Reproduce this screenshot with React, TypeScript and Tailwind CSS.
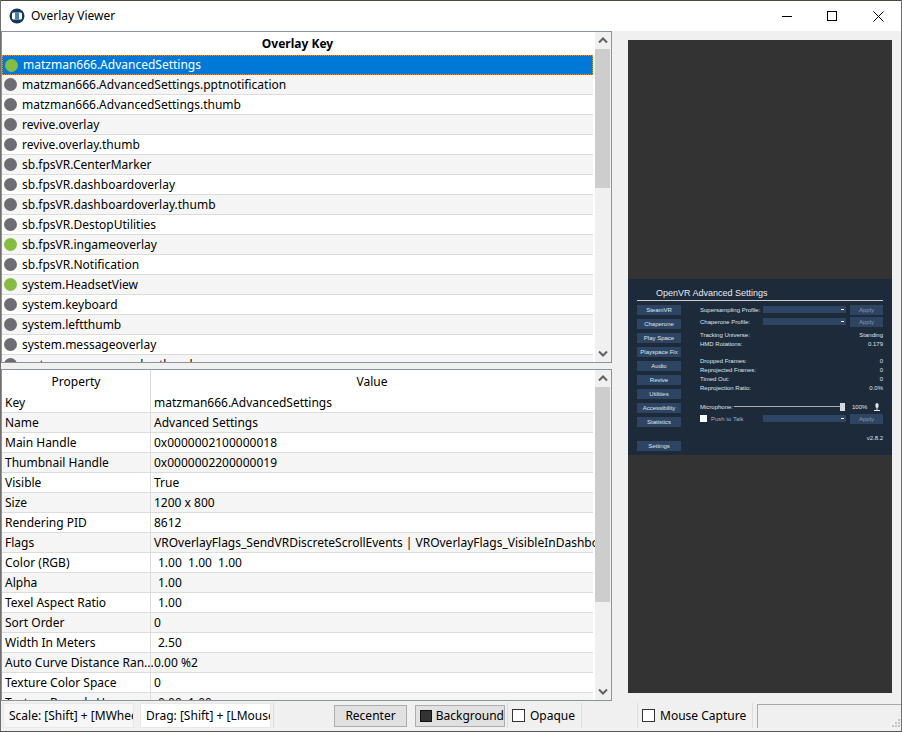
import React from 'react';

const overlays = [
  ['matzman666.AdvancedSettings', true],
  ['matzman666.AdvancedSettings.pptnotification', false],
  ['matzman666.AdvancedSettings.thumb', false],
  ['revive.overlay', false],
  ['revive.overlay.thumb', false],
  ['sb.fpsVR.CenterMarker', false],
  ['sb.fpsVR.dashboardoverlay', false],
  ['sb.fpsVR.dashboardoverlay.thumb', false],
  ['sb.fpsVR.DestopUtilities', false],
  ['sb.fpsVR.ingameoverlay', true],
  ['sb.fpsVR.Notification', false],
  ['system.HeadsetView', true],
  ['system.keyboard', false],
  ['system.leftthumb', false],
  ['system.messageoverlay', false],
  ['system.messageoverlay.thumb', false],
] as const;

const properties: [string, string, boolean?][] = [
  ['Key', 'matzman666.AdvancedSettings'],
  ['Name', 'Advanced Settings'],
  ['Main Handle', '0x0000002100000018'],
  ['Thumbnail Handle', '0x0000002200000019'],
  ['Visible', 'True'],
  ['Size', '1200 x 800'],
  ['Rendering PID', '8612'],
  ['Flags', 'VROverlayFlags_SendVRDiscreteScrollEvents | VROverlayFlags_VisibleInDashboard'],
  ['Color (RGB)', '1.00  1.00  1.00', true],
  ['Alpha', '1.00', true],
  ['Texel Aspect Ratio', '1.00', true],
  ['Sort Order', '0'],
  ['Width In Meters', '2.50', true],
  ['Auto Curve Distance Ran...', '0.00 %2'],
  ['Texture Color Space', '0'],
  ['Texture Bounds U', '0.00  1.00', true],
];

function Chevron({ down }: { down?: boolean }) {
  return (
    <svg width="10" height="7" viewBox="0 0 10 7" className="shrink-0">
      <path d={down ? 'M1 1.5 L5 5.5 L9 1.5' : 'M1 5.5 L5 1.5 L9 5.5'} fill="none" stroke="#606060" strokeWidth="2" />
    </svg>
  );
}

function Scrollbar({ offset, thumb }: { offset: string; thumb: string }) {
  return (
    <div className="flex h-full w-[16px] shrink-0 flex-col bg-[#f0f0f0]">
      <div className="flex h-[17px] shrink-0 items-center justify-center">
        <Chevron />
      </div>
      <div className="min-h-0 flex-1">
        <div className={`${offset} ${thumb} bg-[#cdcdcd]`} />
      </div>
      <div className="flex h-[17px] shrink-0 items-center justify-center">
        <Chevron down />
      </div>
    </div>
  );
}

function OverlayList() {
  return (
    <div className="flex h-[332px] border border-[#8c939d] bg-white">
      <div className="min-w-0 flex-1 overflow-hidden">
        <div className="flex h-[23px] items-center justify-center pr-[2px] text-[12px] font-bold text-black">Overlay Key</div>
        {overlays.map(([name, on], i) => {
          const selected = i === 0;
          return (
            <div
              key={name}
              className={`mr-[2px] flex h-[20px] items-center border-b border-[#dcdcdc] pl-[2px] ${
                selected
                  ? 'border border-dotted border-[#f08a24] bg-[#0078d7] pl-[1px] text-white'
                  : i % 2
                    ? 'bg-[#f5f5f5] text-black'
                    : 'bg-white text-black'
              }`}
            >
              <span className={`h-[13px] w-[13px] shrink-0 rounded-full ${on ? 'bg-[#84bd42]' : 'bg-[#6c6c72]'} ${selected ? 'bg-[#6fb75c]' : ''}`} />
              <span className="ml-[5px] whitespace-nowrap text-[12px]">{name}</span>
            </div>
          );
        })}
      </div>
      <Scrollbar offset="h-[139px]" thumb="w-[15px]" />
    </div>
  );
}

function PropertyTable() {
  return (
    <div className="mt-[6px] flex h-[332px] border border-[#8c939d] bg-white">
      <div className="min-w-0 flex-1 overflow-hidden">
        <div className="flex h-[23px] text-[12px] text-black">
          <div className="flex w-[149px] shrink-0 items-center justify-center border-r border-[#dcdcdc]">Property</div>
          <div className="mr-[2px] flex flex-1 items-center justify-center">Value</div>
        </div>
        {properties.map(([label, value, padded], i) => (
          <div
            key={label}
            className={`mr-[2px] flex h-[20px] items-center border-b border-[#dcdcdc] text-[12px] text-black ${i % 2 ? 'bg-[#f5f5f5]' : 'bg-white'}`}
          >
            <div className="flex h-full w-[149px] shrink-0 items-center whitespace-nowrap border-r border-[#dcdcdc] pl-[3px]">{label}</div>
            <div className={`whitespace-pre ${padded ? 'pl-[7px]' : 'pl-[3px]'}`}>{value}</div>
          </div>
        ))}
      </div>
      <Scrollbar offset="h-[215px]" thumb="w-[15px]" />
    </div>
  );
}

function VrButton({ label, className = '' }: { label: string; className?: string }) {
  return (
    <div className={`flex h-[10px] w-[44px] items-center justify-center bg-[#2d4562] text-[6px] text-[#dfe6ee] ${className}`}>{label}</div>
  );
}

function VrSelect({ apply = true }: { apply?: boolean }) {
  return (
    <div className="flex items-center">
      <div className="flex h-[7px] w-[83px] items-center justify-end bg-[#2d4562] pr-[2px]">
        <span className="h-px w-[3px] bg-white" />
      </div>
      {apply && <div className="ml-[4px] flex h-[10px] w-[33px] items-center justify-center bg-[#2d4562] text-[6px] text-[#8d99a8]">Apply</div>}
    </div>
  );
}

function VrStat({ label, value, className = '' }: { label: string; value: string; className?: string }) {
  return (
    <div className={`flex h-[9px] items-center justify-between text-[6px] text-[#dfe6ee] ${className}`}>
      <span>{label}</span>
      <span>{value}</span>
    </div>
  );
}

// thumbnail of the advanced settings overlay
function OverlayPreview() {
  const menu = ['SteamVR', 'Chaperone', 'Play Space', 'Playspace Fix', 'Audio', 'Revive', 'Utilities', 'Accessibility', 'Statistics'];
  return (
    <div className="h-[176px] w-full bg-[#1c2a3a] px-[9px] pt-[8px] font-['Liberation_Sans',sans-serif] leading-none">
      <div className="h-[12px] pl-[19px] text-[9px] leading-[12px] text-[#e8edf2]">OpenVR Advanced Settings</div>
      <div className="mt-[1px] h-px w-[246px] bg-[#c9ced4]" />
      <div className="mt-[4px] flex">
        <div className="flex w-[44px] flex-col gap-[4px]">
          {menu.map((m) => (
            <VrButton key={m} label={m} />
          ))}
          <VrButton label="Settings" className="mt-[10px]" />
        </div>
        <div className="ml-[19px] w-[183px]">
          <div className="flex h-[10px] items-center justify-between text-[6px] text-[#dfe6ee]">
            <span>Supersampling Profile:</span>
            <VrSelect />
          </div>
          <div className="mt-[2px] flex h-[10px] items-center justify-between text-[6px] text-[#dfe6ee]">
            <span>Chaperone Profile:</span>
            <VrSelect />
          </div>
          <VrStat label="Tracking Universe:" value="Standing" className="mt-[4px]" />
          <VrStat label="HMD Rotations:" value="0.179" />
          <VrStat label="Dropped Frames:" value="0" className="mt-[8px]" />
          <VrStat label="Reprojected Frames:" value="0" />
          <VrStat label="Timed Out:" value="0" />
          <VrStat label="Reprojection Ratio:" value="0.0%" />
          <div className="mt-[9px] flex h-[10px] items-center text-[6px] text-[#dfe6ee]">
            <span className="w-[34px]">Microphone:</span>
            <div className="h-px w-[110px] bg-[#aab0b6]" />
            <span className="-ml-[4px] h-[8px] w-[5px] bg-[#d5d8dc]" />
            <span className="ml-[7px]">100%</span>
            <svg width="8" height="10" viewBox="0 0 8 10" className="ml-[6px]">
              <rect x="2.5" y="1" width="3" height="5" rx="1.5" fill="#dfe6ee" />
              <path d="M1 8.5 H7 M4 6 V8.5" stroke="#dfe6ee" />
            </svg>
          </div>
          <div className="mt-[2px] flex h-[10px] items-center justify-between text-[6px] text-[#9fb0c4]">
            <div className="flex items-center">
              <span className="h-[7px] w-[7px] bg-white" />
              <span className="ml-[4px]">Push to Talk</span>
            </div>
            <VrSelect />
          </div>
          <div className="mt-[11px] text-right text-[6px] text-[#dfe6ee]">v2.8.2</div>
        </div>
      </div>
    </div>
  );
}

function Separator() {
  return <div className="h-[25px] w-[2px] shrink-0 border-r border-[#dcdcdc]" />;
}

function CheckBox({ label }: { label: string }) {
  return (
    <label className="flex items-center text-[12px] text-black">
      <span className="h-[13px] w-[13px] border border-[#333] bg-white" />
      <span className="ml-[5px] whitespace-nowrap">{label}</span>
    </label>
  );
}

function StatusBar() {
  return (
    <div className="flex h-[29px] items-center bg-[#f0f0f0] text-[12px] text-black">
      <div className="ml-[2px] flex h-[25px] w-[131px] items-center overflow-hidden whitespace-nowrap border border-[#e8e8e8] bg-[#f7f7f7] pl-[5px]">Scale: [Shift] + [MWheel]</div>
      <div className="ml-[6px] flex h-[25px] w-[131px] items-center overflow-hidden whitespace-nowrap border border-[#e8e8e8] bg-white pl-[5px]">Drag: [Shift] + [LMouse]</div>
      <div className="ml-px"><Separator /></div>
      <button className="ml-[60px] h-[22px] w-[73px] border border-[#adadad] bg-[#e1e1e1]">Recenter</button>
      <button className="ml-[8px] flex h-[22px] w-[90px] items-center border border-[#adadad] bg-[#e1e1e1] pl-[4px]">
        <span className="h-[12px] w-[12px] border border-[#111] bg-[#333]" />
        <span className="ml-[4px]">Background</span>
      </button>
      <div className="ml-px"><Separator /></div>
      <div className="ml-[4px]"><CheckBox label="Opaque" /></div>
      <div className="ml-[5px]"><Separator /></div>
      <div className="ml-[54px]"><Separator /></div>
      <div className="ml-[4px]"><CheckBox label="Mouse Capture" /></div>
      <div className="ml-[5px]"><Separator /></div>
      <div className="ml-[4px] flex h-[24px] flex-1 items-end justify-end border-l border-t border-[#a8a8a8] pb-[1px] pr-[1px]">
        <svg width="8" height="8" viewBox="0 0 8 8">
          <path d="M6 0h2v2H6zM3 3h2v2H3zM6 3h2v2H6zM0 6h2v2H0zM3 6h2v2H3zM6 6h2v2H6z" fill="#c4c4c4" />
        </svg>
      </div>
    </div>
  );
}

export default function App() {
  return (
    <div className="flex h-[732px] w-[902px] flex-col overflow-hidden border-x border-b border-x-[#6e6e6e] border-b-[#555] bg-[#f0f0f0] font-['Noto_Sans',sans-serif]">
      <div className="-mx-px h-px shrink-0 bg-[#4c4a38]" />
      <div className="flex h-[30px] shrink-0 items-center bg-white">
        <svg width="16" height="16" viewBox="0 0 16 16" className="ml-[8px]">
          <circle cx="8" cy="8" r="7.5" fill="#12385e" />
          <rect x="3" y="4.5" width="10" height="7" rx="1.5" fill="#fff" />
          <rect x="6" y="4.5" width="4" height="7" fill="#4a7fb0" />
        </svg>
        <span className="ml-[6px] text-[12px] text-black">Overlay Viewer</span>
        <div className="ml-auto flex items-center">
          <svg width="10" height="10" viewBox="0 0 10 10" className="mr-[35px]"><path d="M0 5.5 H10" stroke="#000" /></svg>
          <svg width="10" height="10" viewBox="0 0 10 10" className="mr-[36px]"><rect x="0.5" y="0.5" width="9" height="9" fill="none" stroke="#000" /></svg>
          <svg width="11" height="11" viewBox="0 0 11 11" className="mr-[17px]"><path d="M0.5 0.5 L10.5 10.5 M10.5 0.5 L0.5 10.5" stroke="#000" /></svg>
        </div>
      </div>
      <div className="flex h-[670px] shrink-0">
        <div className="w-[611px] shrink-0">
          <OverlayList />
          <PropertyTable />
        </div>
        <div className="ml-[16px] mt-[9px] flex h-[653px] w-[264px] flex-col justify-center bg-[#333]">
          <OverlayPreview />
        </div>
      </div>
      <StatusBar />
    </div>
  );
}
